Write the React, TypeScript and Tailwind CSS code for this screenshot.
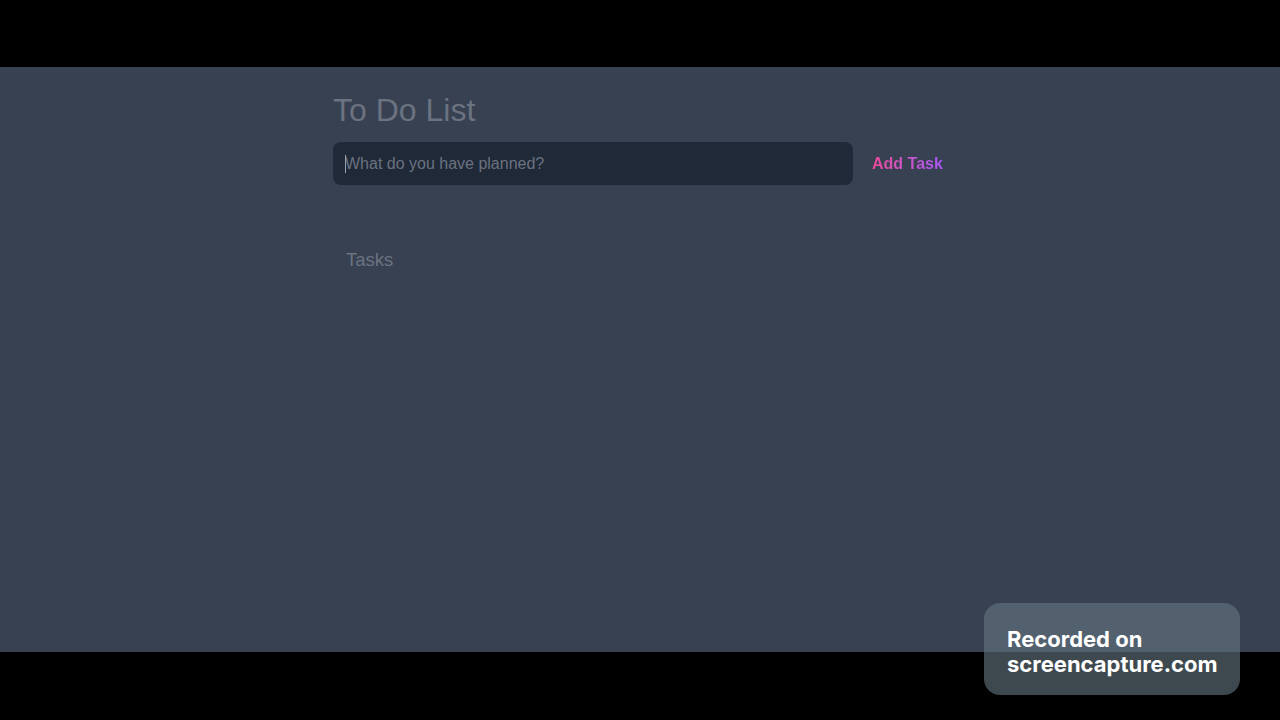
import React from "react";

export default function App() {
  return (
    <div className="relative flex h-[720px] w-[1280px] flex-col bg-black" style={{ fontFamily: '"Liberation Sans", Arial, sans-serif' }}>
      <div className="h-[67px] shrink-0 bg-black" />
      <div className="h-[585px] shrink-0 bg-[#374151]">
        <div className="mx-auto w-[614px] pt-[23px]">
          <h1 className="text-[32px] leading-[40px] text-[#6b7280]">To Do List</h1>
          <div className="mt-[12px] flex items-center">
            <div className="relative">
              <input
                type="text"
                placeholder="What do you have planned?"
                className="h-[43px] w-[520px] rounded-lg bg-[#1f2937] px-3 text-base text-gray-300 placeholder-[#6b7280] caret-gray-400 outline-none"
              />
              <span className="pointer-events-none absolute left-[12px] top-[13px] h-[18px] w-px bg-gray-400" />
            </div>
            <button className="ml-[19px] bg-gradient-to-r from-[#ec4899] to-[#a855f7] bg-clip-text text-base font-bold text-transparent">
              Add Task
            </button>
          </div>
          <h2 className="mt-[61px] pl-[13px] text-[18.5px] leading-7 text-[#6b7280]">Tasks</h2>
        </div>
      </div>
      <div className="flex-1 bg-black" />
      <div
        className="absolute left-[984px] top-[603px] flex h-[92px] w-[256px] flex-col justify-center rounded-[16px] bg-[rgba(100,118,128,0.62)] pl-[23px] pt-[5px] text-[22px] font-bold leading-[25px] text-white"
        style={{ fontFamily: 'Inter, "Noto Sans", sans-serif' }}
      >
        <div>Recorded on</div>
        <div>screencapture.com</div>
      </div>
    </div>
  );
}
